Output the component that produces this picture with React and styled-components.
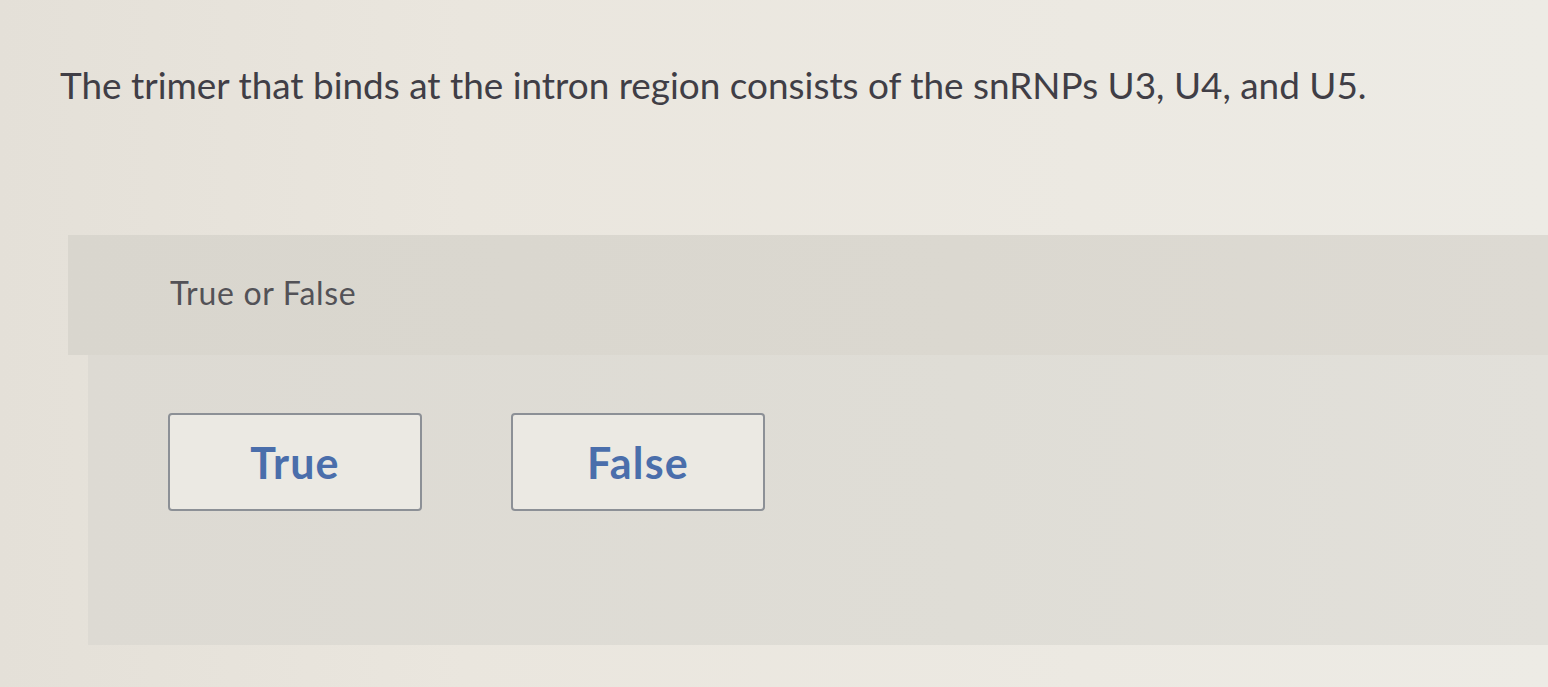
import React from 'react'
import styled, { createGlobalStyle } from 'styled-components'

const GlobalStyle = createGlobalStyle`
   html, body {
      margin: 0;
      padding: 0;
   }
   body {
      width: 1548px;
      height: 687px;
      overflow: hidden;
      background: linear-gradient(90deg, #e4e0d8 0%, #eae6de 30%, #ece9e2 70%, #edebe5 100%);
      font-family: 'Lato', 'Open Sans', sans-serif;
   }
`

function App() {
   return (
      <>
         <GlobalStyle />
         <Page>
            <Question>
               The trimer that binds at the intron region consists of the snRNPs U3, U4, and U5.
            </Question>
            <Panel>
               <PanelHeader>
                  <Prompt>True or False</Prompt>
               </PanelHeader>
               <PanelBody>
                  <Choice>True</Choice>
                  <Choice>False</Choice>
               </PanelBody>
            </Panel>
         </Page>
      </>
   )
}

export default App

const Page = styled.div`
   padding-top: 62px;
   height: 687px;
   box-sizing: border-box;
`

const Question = styled.h1`
   margin: 0 0 0 60px;
   font-family: 'Lato', sans-serif;
   font-weight: 400;
   font-size: 36.9px;
   line-height: 46px;
   color: #403e46;
`

const Panel = styled.div`
   margin-top: 127px;
   display: flex;
   flex-direction: column;
`

const PanelHeader = styled.div`
   margin-left: 68px;
   height: 120px;
   background: linear-gradient(90deg, #d9d6ce 0%, #dbd8d0 60%, #dddad3 100%);
   padding: 38px 0 0 102px;
   box-sizing: border-box;
`

const Prompt = styled.div`
   font-size: 32px;
   line-height: 40px;
   letter-spacing: 0.7px;
   color: #535257;
`

const PanelBody = styled.div`
   margin-left: 88px;
   height: 290px;
   background: linear-gradient(90deg, #dddad3 0%, #dfddd6 60%, #e2e0da 100%);
   padding: 58px 0 0 80px;
   box-sizing: border-box;
   display: flex;
   gap: 89px;
`

const Choice = styled.button`
   width: 254px;
   height: 98px;
   box-sizing: border-box;
   border: 2px solid #8c9096;
   border-radius: 4px;
   background: #ebe9e3;
   color: #4a6eab;
   font-family: 'Lato', sans-serif;
   font-weight: 700;
   font-size: 43px;
   letter-spacing: 1.2px;
   cursor: pointer;
   padding: 0;
`
